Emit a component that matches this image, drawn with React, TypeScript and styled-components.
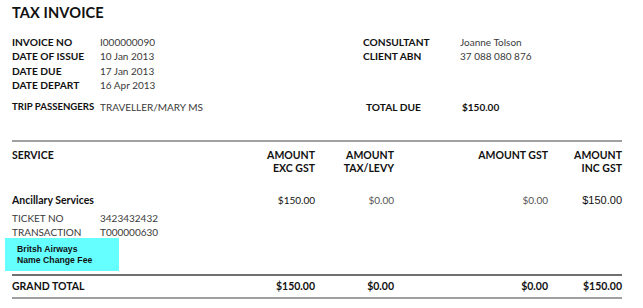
import React from "react";
import styled, { createGlobalStyle } from "styled-components";

const Global = createGlobalStyle`
  html, body { margin: 0; padding: 0; background: #fff; }
  body { font-family: "Lato", "Open Sans", sans-serif; color: #111; }
`;

const Page = styled.div`
  width: 643px;
  height: 308px;
  padding: 3px 21px 0 12px;
  box-sizing: border-box;
  overflow: hidden;
`;

const Title = styled.h1`
  margin: 0;
  font-size: 14.6px;
  font-weight: 700;
  line-height: 20px;
  letter-spacing: 0.1px;
`;

const InfoGrid = styled.div`
  display: grid;
  grid-template-columns: 351px 1fr;
  margin-top: 12px;
`;

const InfoTable = styled.div<{ $label: number; $indent?: number }>`
  display: grid;
  grid-template-columns: ${(p) => p.$label}px 1fr;
  padding-left: ${(p) => p.$indent ?? 0}px;
  align-content: start;
`;

const Label = styled.div<{ $size?: number }>`
  font-size: ${(p) => p.$size ?? 10.2}px;
  font-weight: 700;
  line-height: 14.3px;
  white-space: nowrap;
`;

const Value = styled.div<{ $bold?: boolean }>`
  font-size: 10px;
  font-weight: ${(p) => (p.$bold ? 700 : 400)};
  color: ${(p) => (p.$bold ? "#111" : "#3a3a3a")};
  line-height: 14.3px;
  white-space: nowrap;
`;

const PassengerRow = styled.div`
  display: grid;
  grid-template-columns: 351px 1fr;
  margin-top: 8px;
`;

const Table = styled.div`
  margin-top: 26px;
  border-top: 2px solid #a0a0a0;
`;

const Row = styled.div<{ $pad?: string; $line?: string }>`
  display: grid;
  grid-template-columns: 228px 75px 79px 154px 74px;
  padding: ${(p) => p.$pad ?? "0"};
  border-bottom: ${(p) => p.$line ?? "none"};
`;

const Head = styled.div<{ $right?: boolean }>`
  font-size: 10.5px;
  font-weight: 700;
  line-height: 13px;
  text-align: ${(p) => (p.$right ? "right" : "left")};
  white-space: nowrap;
`;

const Cell = styled.div<{ $right?: boolean; $bold?: boolean; $arial?: boolean; $dark?: boolean }>`
  font-family: ${(p) => (p.$arial ? '"Liberation Sans", Arial, sans-serif' : "inherit")};
  font-size: ${(p) => (p.$arial ? "11px" : p.$bold ? "10.5px" : "10px")};
  font-weight: ${(p) => (p.$bold ? 700 : 400)};
  color: ${(p) => (p.$bold || p.$dark ? "#111" : "#555")};
  line-height: 14px;
  text-align: ${(p) => (p.$right ? "right" : "left")};
  white-space: nowrap;
`;

const Detail = styled.div`
  display: grid;
  grid-template-columns: 88px 1fr;
  margin-top: 4px;
`;

const DetailCell = styled.div`
  font-size: 10px;
  color: #3a3a3a;
  line-height: 14px;
  white-space: nowrap;
`;

const Note = styled.div`
  width: 102px;
  margin-left: -7px;
  margin-top: -1px;
  padding: 6px 0 5px 12px;
  background: #66ffff;
  font-family: "Liberation Sans", Arial, sans-serif;
  font-size: 8.7px;
  font-weight: 700;
  line-height: 11px;
  color: #111;
`;

export default function App() {
  return (
    <Page>
      <Global />
      <Title>TAX INVOICE</Title>
      <InfoGrid>
        <InfoTable $label={88}>
          <Label>INVOICE NO</Label>
          <Value>I000000090</Value>
          <Label>DATE OF ISSUE</Label>
          <Value>10 Jan 2013</Value>
          <Label>DATE DUE</Label>
          <Value>17 Jan 2013</Value>
          <Label>DATE DEPART</Label>
          <Value>16 Apr 2013</Value>
        </InfoTable>
        <InfoTable $label={97}>
          <Label>CONSULTANT</Label>
          <Value>Joanne Tolson</Value>
          <Label>CLIENT ABN</Label>
          <Value>37 088 080 876</Value>
        </InfoTable>
      </InfoGrid>
      <PassengerRow>
        <InfoTable $label={88}>
          <Label $size={9.6}>TRIP PASSENGERS</Label>
          <Value>TRAVELLER/MARY MS</Value>
        </InfoTable>
        <InfoTable $label={96} $indent={3}>
          <Label>TOTAL DUE</Label>
          <Value $bold>$150.00</Value>
        </InfoTable>
      </PassengerRow>
      <Table>
        <Row $pad="7px 0 0">
          <Head>SERVICE</Head>
          <Head $right>AMOUNT<br />EXC GST</Head>
          <Head $right>AMOUNT<br />TAX/LEVY</Head>
          <Head $right>AMOUNT GST</Head>
          <Head $right>AMOUNT<br />INC GST</Head>
        </Row>
        <Row $pad="18px 0 3px" $line="2px solid #707070">
          <div>
            <Cell $bold>Ancillary Services</Cell>
            <Detail>
              <DetailCell>TICKET NO</DetailCell>
              <DetailCell>3423432432</DetailCell>
              <DetailCell>TRANSACTION</DetailCell>
              <DetailCell>T000000630</DetailCell>
            </Detail>
            <Note>
              Britsh Airways
              <br />
              Name Change Fee
            </Note>
          </div>
          <Cell $right $dark>$150.00</Cell>
          <Cell $right>$0.00</Cell>
          <Cell $right>$0.00</Cell>
          <Cell $right $arial $dark>$150.00</Cell>
        </Row>
        <Row $pad="3px 0 4px" $line="2px solid #a0a0a0">
          <Cell $bold>GRAND TOTAL</Cell>
          <Cell $right $bold>$150.00</Cell>
          <Cell $right $bold>$0.00</Cell>
          <Cell $right $bold>$0.00</Cell>
          <Cell $right $bold>$150.00</Cell>
        </Row>
      </Table>
    </Page>
  );
}
